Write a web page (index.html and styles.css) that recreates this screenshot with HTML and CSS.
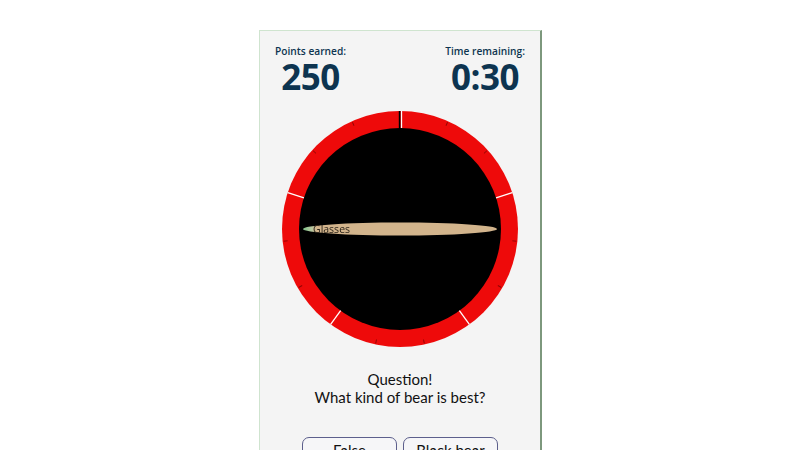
FILE: index.html
```html
<!DOCTYPE html>
<html>
<head>
<meta charset="utf-8">
<link rel="stylesheet" href="styles.css">
</head>
<body>
<div class="panel">
  <div class="header">
    <div class="stat">
      <div class="label">Points earned:</div>
      <div class="value">250</div>
    </div>
    <div class="stat">
      <div class="label">Time remaining:</div>
      <div class="value">0:30</div>
    </div>
  </div>
  <div class="wheel">
    <svg width="240" height="240" viewBox="0 0 240 240">
      <defs>
        <linearGradient id="tip" x1="0" x2="1" y1="0" y2="0">
          <stop offset="0" stop-color="#7fc48a"/>
          <stop offset="0.045" stop-color="#b8c8a0"/>
          <stop offset="0.07" stop-color="#d2b48c"/>
          <stop offset="1" stop-color="#d2b48c"/>
        </linearGradient>
      </defs>
      <circle cx="120" cy="120" r="118" fill="#ee0a0a"/>
      <circle cx="120" cy="120" r="101" fill="#000"/>
      <g stroke="#6a0000" stroke-width="0.9" opacity="0.7">
        <line x1="120" y1="3" x2="120" y2="7" transform="rotate(24 120 120)"/>
        <line x1="120" y1="3" x2="120" y2="7" transform="rotate(48 120 120)"/>
        <line x1="120" y1="3" x2="120" y2="7" transform="rotate(96 120 120)"/>
        <line x1="120" y1="3" x2="120" y2="7" transform="rotate(120 120 120)"/>
        <line x1="120" y1="3" x2="120" y2="7" transform="rotate(168 120 120)"/>
        <line x1="120" y1="3" x2="120" y2="7" transform="rotate(192 120 120)"/>
        <line x1="120" y1="3" x2="120" y2="7" transform="rotate(240 120 120)"/>
        <line x1="120" y1="3" x2="120" y2="7" transform="rotate(264 120 120)"/>
        <line x1="120" y1="3" x2="120" y2="7" transform="rotate(312 120 120)"/>
        <line x1="120" y1="3" x2="120" y2="7" transform="rotate(336 120 120)"/>
      </g>
      <g stroke="#fff" stroke-width="1.3">
        <line x1="121.5" y1="2" x2="121.5" y2="19"/>
        <line x1="120" y1="2" x2="120" y2="19" transform="rotate(72 120 120)"/>
        <line x1="120" y1="2" x2="120" y2="19" transform="rotate(144 120 120)"/>
        <line x1="120" y1="2" x2="120" y2="19" transform="rotate(216 120 120)"/>
        <line x1="120" y1="2" x2="120" y2="19" transform="rotate(288 120 120)"/>
      </g>
      <line x1="119.6" y1="2" x2="119.6" y2="19" stroke="#000" stroke-width="1.6"/>
      <ellipse cx="120" cy="120" rx="97" ry="6.5" fill="url(#tip)"/>
      <text x="33" y="124" class="wtext">Glasses</text>
    </svg>
  </div>
  <div class="question">
    <div>Question!</div>
    <div>What kind of bear is best?</div>
  </div>
  <div class="answers">
    <button class="answer">False</button>
    <button class="answer">Black bear</button>
  </div>
</div>
</body>
</html>
```

FILE: styles.css
```css
html, body {
  margin: 0;
  padding: 0;
  background: #ffffff;
  overflow: hidden;
}
body {
  width: 800px;
  height: 450px;
}
.panel {
  box-sizing: border-box;
  margin: 30px 0 0 259px;
  width: 283px;
  height: 520px;
  background: #f4f4f4;
  border: 1px solid #cfe4cf;
  border-right: 2px solid #7d987d;
  border-bottom: none;
  display: flex;
  flex-direction: column;
  align-items: stretch;
}
.header {
  display: flex;
  justify-content: space-between;
  padding: 13px 15px 0 15px;
}
.stat {
  display: flex;
  flex-direction: column;
  align-items: center;
  color: #0d3450;
  font-family: "Open Sans", sans-serif;
}
.label {
  font-size: 10.2px;
  font-weight: 600;
  line-height: 15px;
}
.value {
  font-size: 35px;
  font-weight: 700;
  line-height: 36px;
  letter-spacing: -0.5px;
}
.wheel {
  display: flex;
  justify-content: center;
  margin-top: 14px;
}
.wheel svg {
  display: block;
}
.wtext {
  font-family: "Open Sans", sans-serif;
  font-size: 10.5px;
  fill: #2a2218;
}
.question {
  margin-top: 21px;
  text-align: center;
  font-family: Lato, sans-serif;
  font-size: 15px;
  line-height: 18px;
  color: #111;
}
.answers {
  display: flex;
  justify-content: center;
  gap: 6px;
  margin-top: 31px;
}
.answer {
  width: 95px;
  padding: 3px 0 8px;
  background: #f6f6f8;
  border: 1px solid #5c5f8c;
  border-radius: 7px;
  font-family: Lato, sans-serif;
  font-size: 15px;
  line-height: 18px;
  color: #111;
}
```
